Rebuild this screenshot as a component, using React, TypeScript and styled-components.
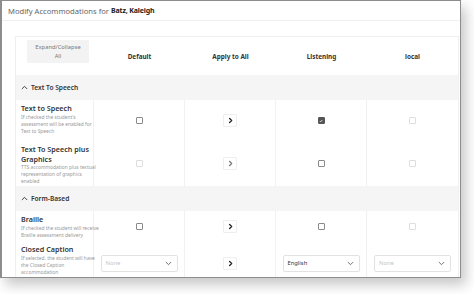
import * as React from "react";
import styled, { createGlobalStyle } from "styled-components";

const GlobalStyle = createGlobalStyle`
	html, body {
		margin: 0;
		padding: 0;
		background: #ffffff;
	}
	body {
		font-family: "Noto Sans", "Open Sans", sans-serif;
		width: 474px;
		height: 294px;
		overflow: hidden;
	}
`;

const Frame = styled.div`
	width: 458px;
	height: 276px;
	border: 1px solid #8d8d8d;
	border-left-width: 2px;
	box-shadow: 5px 7px 12px rgba(0, 0, 0, 0.22);
	background: #ffffff;
	overflow: hidden;
`;

const TitleBar = styled.div`
	height: 19px;
	padding: 0 6px;
	display: flex;
	align-items: center;
	border-bottom: 1px solid #f0f0f0;
	font-size: 7.6px;
	color: #666;
	white-space: nowrap;
`;

const Student = styled.strong`
	color: #222;
	font-weight: 700;
	font-size: 7px;
	letter-spacing: -0.15px;
	margin-left: 2px;
`;

const Body = styled.div`
	padding: 15px 0 0 13px;
`;

const Table = styled.div`
	width: 442px;
	border: 1px solid #efefef;
	border-bottom: none;
	display: grid;
	grid-template-columns: 78px repeat(4, 91px);
`;

const HeadCell = styled.div`
	height: 38px;
	display: flex;
	align-items: center;
	justify-content: center;
	font-size: 6.4px;
	font-weight: 700;
	color: #333;
`;

const ExpandButton = styled.button`
	width: 62px;
	height: 23px;
	margin: 3px 0 0 6px;
	align-self: flex-start;
	border: none;
	background: #f3f3f3;
	color: #777;
	font-family: inherit;
	font-size: 5.8px;
	line-height: 9px;
	padding: 0;
`;

const GroupRow = styled.div`
	grid-column: 1 / -1;
	height: 25px;
	background: #f5f5f5;
	display: flex;
	align-items: center;
	gap: 3px;
	padding-left: 5px;
	font-size: 6.6px;
	font-weight: 600;
	color: #333;
`;

const LabelCell = styled.div<{ $h: number }>`
	height: ${({ $h }) => $h}px;
	padding: 4px 0 0 5px;
	box-sizing: border-box;
	border-right: 1px solid #f1f1f1;
	white-space: nowrap;
`;

const RowTitle = styled.div`
	font-size: 7.2px;
	font-weight: 600;
	color: #333;
	line-height: 9.5px;
`;

const RowDesc = styled.div`
	font-size: 4.9px;
	color: #9a9a9a;
	line-height: 7px;
`;

const Cell = styled.div<{ $h: number; $last?: boolean }>`
	height: ${({ $h }) => $h}px;
	display: flex;
	align-items: center;
	justify-content: center;
	border-right: ${({ $last }) => ($last ? "none" : "1px solid #f1f1f1")};
	box-sizing: border-box;
`;

const Check = styled.span<{ $checked?: boolean; $disabled?: boolean }>`
	width: 5px;
	height: 5px;
	border-radius: 1px;
	border: 1px solid ${({ $checked, $disabled }) =>
		$checked ? "#555" : $disabled ? "#dedede" : "#8a8a8a"};
	background: ${({ $checked }) => ($checked ? "#555" : "#fff")};
	display: flex;
	align-items: center;
	justify-content: center;
`;

const ArrowButton = styled.span<{ $disabled?: boolean }>`
	width: 14px;
	height: 13px;
	border: 1px solid #eeeeee;
	border-radius: 1px;
	background: #fff;
	display: flex;
	align-items: center;
	justify-content: center;
	color: ${({ $disabled }) => ($disabled ? "#777" : "#222")};
	box-sizing: border-box;
`;

const Select = styled.div<{ $placeholder?: boolean }>`
	width: 77px;
	height: 17px;
	box-sizing: border-box;
	border: 1px solid #e2e2e2;
	border-radius: 2px;
	display: flex;
	align-items: center;
	justify-content: space-between;
	padding: 0 5px 0 4px;
	font-size: 5.8px;
	color: ${({ $placeholder }) => ($placeholder ? "#c4c4c4" : "#333")};
`;

const Chevron = ({ dir, size = 6, color = "currentColor" }: { dir: "up" | "down" | "right"; size?: number; color?: string }) => {
	const d = dir === "up" ? "M2 8 L6 4 L10 8" : dir === "down" ? "M2 4 L6 8 L10 4" : "M4.5 2.5 L8 6 L4.5 9.5";
	return (
		<svg width={size} height={size} viewBox="0 0 12 12">
			<path d={d} fill="none" stroke={color} strokeWidth={dir === "right" ? 2.2 : 1.6} strokeLinecap="round" strokeLinejoin="round" />
		</svg>
	);
};

type Cb = { kind: "check"; checked?: boolean; disabled?: boolean } | { kind: "select"; value: string; placeholder?: boolean };

interface RowData {
	title: string[];
	desc: string[];
	height: number;
	def: Cb;
	arrowDisabled?: boolean;
	listening: Cb;
	local: Cb;
}

const groups: { name: string; rows: RowData[] }[] = [
	{
		name: "Text To Speech",
		rows: [
			{
				title: ["Text to Speech"],
				desc: ["If checked the student's", "assessment will be enabled for", "Text to Speech"],
				height: 41,
				def: { kind: "check" },
				listening: { kind: "check", checked: true },
				local: { kind: "check", disabled: true },
			},
			{
				title: ["Text To Speech plus", "Graphics"],
				desc: ["TTS accommodation plus textual", "representation of graphics", "enabled"],
				height: 45,
				def: { kind: "check", disabled: true },
				arrowDisabled: true,
				listening: { kind: "check" },
				local: { kind: "check", disabled: true },
			},
		],
	},
	{
		name: "Form-Based",
		rows: [
			{
				title: ["Braille"],
				desc: ["If checked the student will receive", "Braille assessment delivery"],
				height: 30,
				def: { kind: "check" },
				listening: { kind: "check" },
				local: { kind: "check", disabled: true },
			},
			{
				title: ["Closed Caption"],
				desc: ["If selected, the student will have", "the Closed Caption", "accommodation"],
				height: 44,
				def: { kind: "select", value: "None", placeholder: true },
				listening: { kind: "select", value: "English" },
				local: { kind: "select", value: "None", placeholder: true },
			},
		],
	},
];

const Control = ({ cb }: { cb: Cb }) => {
	if (cb.kind === "select") {
		return (
			<Select $placeholder={cb.placeholder}>
				{cb.value}
				<Chevron dir="down" size={7} color="#666" />
			</Select>
		);
	}
	return (
		<Check $checked={cb.checked} $disabled={cb.disabled}>
			{cb.checked && (
				<svg width="4" height="4" viewBox="0 0 8 8">
					<path d="M1.5 4 L3.3 5.8 L6.5 2" fill="none" stroke="#fff" strokeWidth="1.5" />
				</svg>
			)}
		</Check>
	);
};

export default function App() {
	return (
		<>
			<GlobalStyle />
			<Frame>
				<TitleBar>
					Modify Accommodations for <Student>Batz, Kaleigh</Student>
				</TitleBar>
				<Body>
					<Table>
						<HeadCell>
							<ExpandButton>
								Expand/Collapse
								<br />
								All
							</ExpandButton>
						</HeadCell>
						<HeadCell>Default</HeadCell>
						<HeadCell>Apply to All</HeadCell>
						<HeadCell>Listening</HeadCell>
						<HeadCell>local</HeadCell>
						{groups.map((g) => (
							<React.Fragment key={g.name}>
								<GroupRow>
									<Chevron dir="up" size={7} color="#333" />
									{g.name}
								</GroupRow>
								{g.rows.map((r) => (
									<React.Fragment key={r.title.join(" ")}>
										<LabelCell $h={r.height}>
											{r.title.map((t) => (
												<RowTitle key={t}>{t}</RowTitle>
											))}
											{r.desc.map((t) => (
												<RowDesc key={t}>{t}</RowDesc>
											))}
										</LabelCell>
										<Cell $h={r.height}>
											<Control cb={r.def} />
										</Cell>
										<Cell $h={r.height}>
											<ArrowButton $disabled={r.arrowDisabled}>
												<Chevron dir="right" size={7} />
											</ArrowButton>
										</Cell>
										<Cell $h={r.height}>
											<Control cb={r.listening} />
										</Cell>
										<Cell $h={r.height} $last>
											<Control cb={r.local} />
										</Cell>
									</React.Fragment>
								))}
							</React.Fragment>
						))}
					</Table>
				</Body>
			</Frame>
		</>
	);
}
